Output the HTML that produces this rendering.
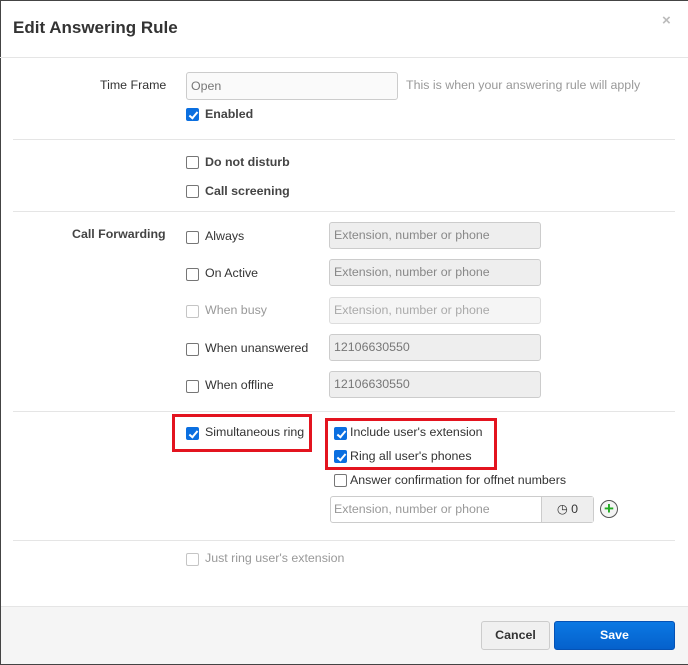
<!DOCTYPE html><html><head><style>
*{box-sizing:border-box}body{margin:0;width:688px;height:665px;overflow:hidden;font-family:"Liberation Sans",sans-serif;font-size:12.4px;color:#333;background:#fff}
.a{position:absolute}
.hr{position:absolute;left:13px;right:13px;height:1px;background:#e5e5e5}
.cb{position:absolute;width:13px;height:13px;border:1px solid #767676;border-radius:2px;background:#fff}
.cb.on{background:#0b6fe0;border-color:#0b6fe0}
.cb.on:after{content:"";position:absolute;left:3.5px;top:0.5px;width:3px;height:7px;border:solid #fff;border-width:0 2px 2px 0;transform:rotate(40deg)}
.cb.dis{border-color:#c5c5c5}
.inp{position:absolute;border:1px solid #ccc;border-radius:3px;background:#eee;color:#888;padding:0 4px;line-height:25px;height:27px;width:212px;left:329px}
.red{position:absolute;border:3px solid #e3141f}
</style></head><body>
<div class="a" style="left:0;top:0;width:688px;height:665px;border:1px solid #444;border-right:none"></div>
<div class="a" style="left:13px;top:18px;font-size:17px;font-weight:bold;color:#333">Edit Answering Rule</div>
<div class="a" style="left:662px;top:12px;font-size:15px;color:#bbb;font-weight:bold">×</div>
<div class="a" style="left:0;right:0;top:57px;height:1px;background:#e5e5e5"></div>

<div class="a" style="left:100px;top:78px">Time Frame</div>
<div class="a" style="left:186px;top:72px;width:212px;height:28px;border:1px solid #ccc;border-radius:3px;padding:0 4px;line-height:26px;color:#777;background:#fafafa">Open</div>
<div class="a" style="left:406px;top:78px;color:#999">This is when your answering rule will apply</div>
<div class="cb on" style="left:186px;top:108px"></div><div class="a" style="left:205px;top:107px;font-weight:bold;color:#444">Enabled</div>
<div class="hr" style="top:139px"></div>
<div class="cb" style="left:186px;top:156px"></div><div class="a" style="left:205px;top:155px;font-weight:bold;color:#444">Do not disturb</div>
<div class="cb" style="left:186px;top:185px"></div><div class="a" style="left:205px;top:184px;font-weight:bold;color:#444">Call screening</div>
<div class="hr" style="top:211px"></div>

<div class="a" style="left:72px;top:227px;font-weight:bold;color:#444">Call Forwarding</div>
<div class="cb" style="left:186px;top:231px"></div><div class="a" style="left:205px;top:229px">Always</div>
<div class="inp" style="top:222px">Extension, number or phone</div>
<div class="cb" style="left:186px;top:268px"></div><div class="a" style="left:205px;top:266px">On Active</div>
<div class="inp" style="top:259px">Extension, number or phone</div>
<div class="cb dis" style="left:186px;top:305px"></div><div class="a" style="left:205px;top:303px;color:#999">When busy</div>
<div class="inp" style="top:297px;background:#f5f5f5;color:#aaa;border-color:#ddd">Extension, number or phone</div>
<div class="cb" style="left:186px;top:343px"></div><div class="a" style="left:205px;top:341px">When unanswered</div>
<div class="inp" style="top:334px;color:#777">12106630550</div>
<div class="cb" style="left:186px;top:380px"></div><div class="a" style="left:205px;top:378px">When offline</div>
<div class="inp" style="top:371px;color:#777">12106630550</div>
<div class="hr" style="top:411px"></div>

<div class="red" style="left:172px;top:414px;width:140px;height:38px"></div>
<div class="cb on" style="left:186px;top:427px"></div><div class="a" style="left:205px;top:425px">Simultaneous ring</div>
<div class="red" style="left:325px;top:418px;width:172px;height:52px"></div>
<div class="cb on" style="left:334px;top:427px"></div><div class="a" style="left:350px;top:425px">Include user's extension</div>
<div class="cb on" style="left:334px;top:450px"></div><div class="a" style="left:350px;top:449px">Ring all user's phones</div>
<div class="cb" style="left:334px;top:474px"></div><div class="a" style="left:350px;top:473px">Answer confirmation for offnet numbers</div>
<div class="a" style="left:330px;top:496px;width:264px;height:27px;border:1px solid #ccc;border-radius:3px;background:#fff"></div>
<div class="a" style="left:334px;top:502px;color:#999">Extension, number or phone</div>
<div class="a" style="left:541px;top:497px;width:52px;height:25px;background:#eee;border-left:1px solid #ccc;text-align:center;line-height:25px;color:#333">&#9719; 0</div>
<div class="a" style="left:600px;top:500px;width:18px;height:18px;border:1px solid #555;border-radius:50%;background:#f4f4f4;color:#2a2;text-align:center;line-height:15px;font-weight:bold;font-size:17px">+</div>
<div class="hr" style="top:540px"></div>
<div class="cb dis" style="left:186px;top:553px"></div><div class="a" style="left:205px;top:551px;color:#999">Just ring user's extension</div>

<div class="a" style="left:1px;right:0;top:606px;height:58px;background:#f5f5f5;border-top:1px solid #e5e5e5"></div>
<div class="a" style="left:481px;top:621px;width:69px;height:29px;border:1px solid #ccc;border-radius:3px;background:#f0f0f0;text-align:center;line-height:27px;font-weight:bold">Cancel</div>
<div class="a" style="left:554px;top:621px;width:121px;height:29px;border:1px solid #0552b5;border-radius:3px;background:linear-gradient(#0b78e3,#0561cc);text-align:center;line-height:27px;font-weight:bold;color:#fff">Save</div>
</body></html>
